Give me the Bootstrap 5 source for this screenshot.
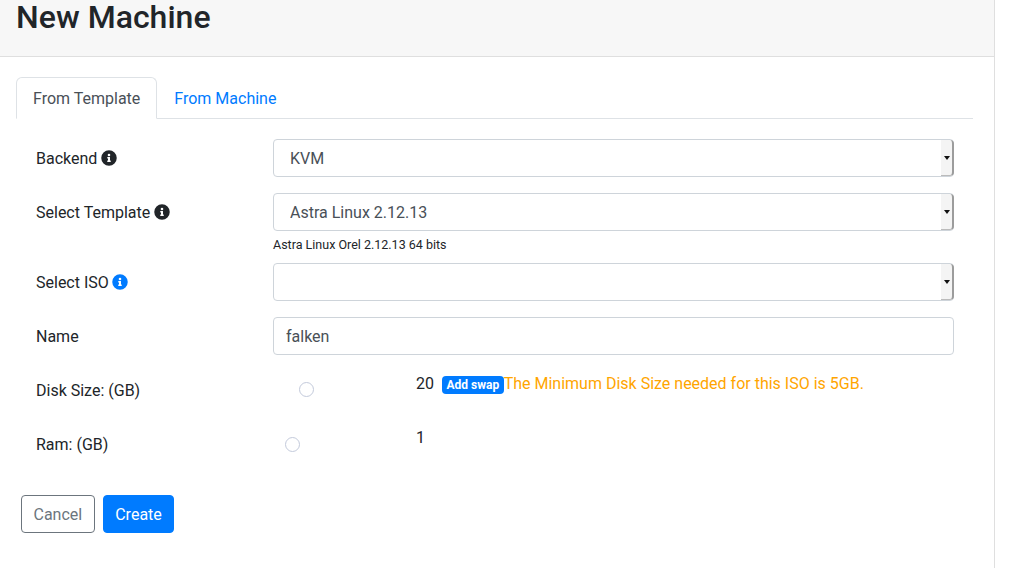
<!DOCTYPE html>
<html lang="en">
<head>
<meta charset="utf-8">
<title>New Machine</title>
<link href="https://cdn.jsdelivr.net/npm/bootstrap@5.3.0/dist/css/bootstrap.min.css" rel="stylesheet">
<style>
html,body{height:100%;overflow:hidden;}
body{font-family:Roboto,"Liberation Sans",sans-serif;font-size:16px;color:#212529;background:#fff;}
.page-shell{width:995px;height:568px;border-right:1px solid #dfdfdf;}
.head-band{height:57px;background:#f7f7f7;border-bottom:1px solid #dfdfdf;padding:0 16px;}
.head-band h1{font-size:32px;font-weight:500;line-height:34px;margin:0;color:#212529;letter-spacing:.02px;}
.body-pad{padding:20px 21px 0 16px;}
.nav-tabs{border-bottom-color:#dee2e6;}
.nav-tabs .nav-link{color:#007bff;height:42px;padding:9px 16px 7px;line-height:24px;}
.nav-tabs .nav-link.active{color:#495057;border-color:#dee2e6 #dee2e6 #fff;}
.form-wrap{padding:20px 0 0 5px;width:953px;}
.form-wrap .row{--bs-gutter-x:30px;margin:0 0 16px;}
.form-wrap .row>*{padding-left:15px;padding-right:15px;}
.field-label{display:block;height:38px;line-height:39px;margin:0;color:#212529;}
.pick-wrap{position:relative;}
.pick-wrap::after{content:"";position:absolute;top:1px;right:0;bottom:1px;width:13px;background:#f4f4f4;border-right:2px solid #9c9c9c;border-bottom:1px solid #bbb;border-radius:0 4px 4px 0;pointer-events:none;}
.pick-wrap::before{content:"";position:absolute;top:17px;right:4px;z-index:1;border-style:solid;border-width:4px 3.5px 0;border-color:#111 transparent transparent;pointer-events:none;}
.native-pick{appearance:none;background-image:none;height:38px;border-color:#ced4da;color:#495057;font-family:inherit;padding:7px 12px 5px 16px;border-radius:4px;}
.form-control{height:38px;color:#495057;border-color:#ced4da;border-radius:4px;padding:6px 12px;}
.hint-text{font-size:12.5px;line-height:18px;margin:5px 0 -7px;color:#212529;}
.info-ico{width:16px;height:16px;vertical-align:-2px;margin-left:-.5px;}
.knob{display:block;width:15px;height:15px;border-radius:50%;border:1px solid #c3cadb;background:#fff;margin-top:-1px;}
.knob-a{margin-left:26px;}
.knob-b{margin-left:12px;margin-top:1px;}
.value-col{padding-left:0!important;line-height:24px;margin-top:-12px;}
.swap-tag{background:#007bff;font-size:12px;font-weight:700;padding:3px 4.5px;line-height:12px;border-radius:4px;margin-left:4px;vertical-align:0;display:inline-block;}
.warn-text{color:orange;}
.range-row{height:38px;align-items:center;}
.btn{border-radius:4px;height:38px;padding:7px 11.5px 5px;}
.btn-primary{background:#007bff;border-color:#007bff;}
.btn-outline-secondary{color:#6c757d;border-color:#6c757d;}
.action-row{margin-top:32px;gap:8px;}
</style>
</head>
<body>
<div class="page-shell">
  <div class="head-band"><h1>New Machine</h1></div>
  <div class="body-pad">
    <ul class="nav nav-tabs">
      <li class="nav-item"><a class="nav-link active" href="#">From Template</a></li>
      <li class="nav-item"><a class="nav-link" href="#">From Machine</a></li>
    </ul>
    <form class="form-wrap">
      <div class="row">
        <div class="col-3"><label class="field-label">Backend <svg class="info-ico" viewBox="0 0 512 512"><path fill="#212529" d="M256 8a248 248 0 1 0 0 496 248 248 0 0 0 0-496zm0 110a42 42 0 1 1 0 84 42 42 0 0 1 0-84zm56 254c0 7-5 12-12 12h-88c-7 0-12-5-12-12v-24c0-7 5-12 12-12h12v-64h-12c-7 0-12-5-12-12v-24c0-7 5-12 12-12h64c7 0 12 5 12 12v100h12c7 0 12 5 12 12z"/></svg></label></div>
        <div class="col-9"><div class="pick-wrap"><select class="form-select native-pick"><option>KVM</option></select></div></div>
      </div>
      <div class="row">
        <div class="col-3"><label class="field-label">Select Template <svg class="info-ico" viewBox="0 0 512 512"><path fill="#212529" d="M256 8a248 248 0 1 0 0 496 248 248 0 0 0 0-496zm0 110a42 42 0 1 1 0 84 42 42 0 0 1 0-84zm56 254c0 7-5 12-12 12h-88c-7 0-12-5-12-12v-24c0-7 5-12 12-12h12v-64h-12c-7 0-12-5-12-12v-24c0-7 5-12 12-12h64c7 0 12 5 12 12v100h12c7 0 12 5 12 12z"/></svg></label></div>
        <div class="col-9"><div class="pick-wrap"><select class="form-select native-pick"><option>Astra Linux 2.12.13</option></select></div><p class="hint-text">Astra Linux Orel 2.12.13 64 bits</p></div>
      </div>
      <div class="row">
        <div class="col-3"><label class="field-label">Select ISO <svg class="info-ico" viewBox="0 0 512 512"><path fill="#007bff" d="M256 8a248 248 0 1 0 0 496 248 248 0 0 0 0-496zm0 110a42 42 0 1 1 0 84 42 42 0 0 1 0-84zm56 254c0 7-5 12-12 12h-88c-7 0-12-5-12-12v-24c0-7 5-12 12-12h12v-64h-12c-7 0-12-5-12-12v-24c0-7 5-12 12-12h64c7 0 12 5 12 12v100h12c7 0 12 5 12 12z"/></svg></label></div>
        <div class="col-9"><div class="pick-wrap"><select class="form-select native-pick"><option></option></select></div></div>
      </div>
      <div class="row">
        <div class="col-3"><label class="field-label">Name</label></div>
        <div class="col-9"><input class="form-control" type="text" value="falken"></div>
      </div>
      <div class="row range-row">
        <div class="col-3"><label class="field-label">Disk Size: (GB)</label></div>
        <div class="col-2"><span class="knob knob-a"></span></div>
        <div class="col-7 value-col">20 <span class="badge swap-tag">Add swap</span><span class="warn-text">The Minimum Disk Size needed for this ISO is 5GB.</span></div>
      </div>
      <div class="row range-row">
        <div class="col-3"><label class="field-label">Ram: (GB)</label></div>
        <div class="col-2"><span class="knob knob-b"></span></div>
        <div class="col-7 value-col">1</div>
      </div>
      <div class="d-flex action-row">
        <button type="button" class="btn btn-outline-secondary">Cancel</button>
        <button type="button" class="btn btn-primary">Create</button>
      </div>
    </form>
  </div>
</div>
<script src="https://cdn.jsdelivr.net/npm/bootstrap@5.3.0/dist/js/bootstrap.bundle.min.js"></script>
</body>
</html>
